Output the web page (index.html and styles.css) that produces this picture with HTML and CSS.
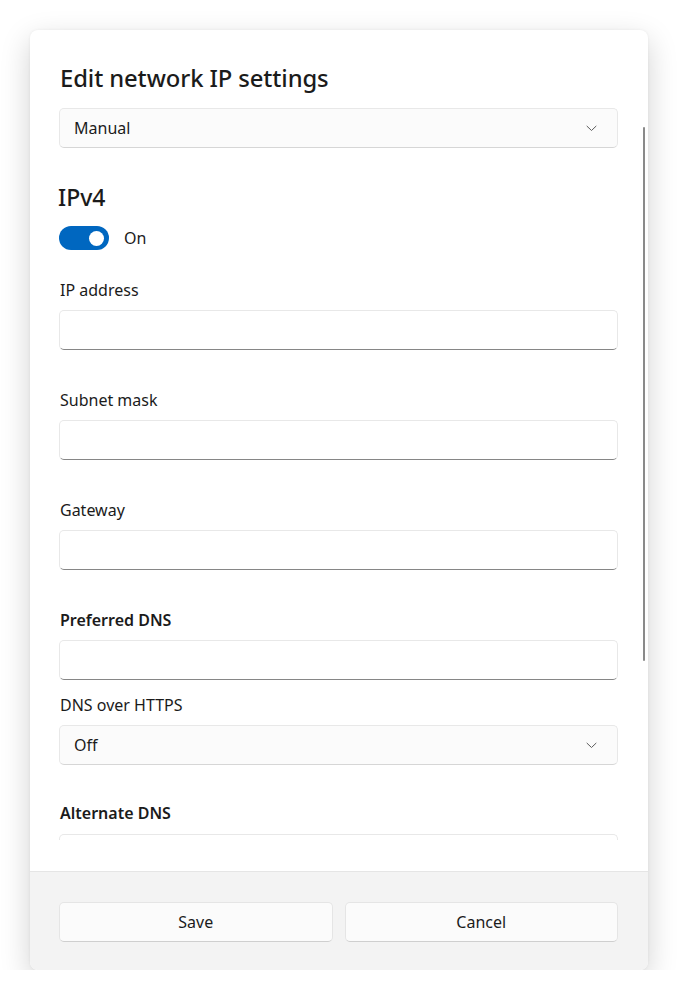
FILE: index.html
```html
<!DOCTYPE html>
<html lang="en">
<head>
<meta charset="utf-8">
<title>Edit network IP settings</title>
<link rel="stylesheet" href="styles.css">
</head>
<body>
<div class="dialog">
  <div class="main">
    <div class="scroll">
      <h1 class="title">Edit network IP settings</h1>
      <div class="select">
        <span>Manual</span>
        <svg class="chev" width="11" height="7" viewBox="0 0 11 7"><path d="M1 1.2 L5.5 5.5 L10 1.2" fill="none" stroke="#5c5c5c" stroke-width="1" stroke-linecap="round" stroke-linejoin="round"/></svg>
      </div>
      <h2 class="section">IPv4</h2>
      <div class="toggle-row">
        <span class="toggle"><span class="knob"></span></span>
        <span class="toggle-label">On</span>
      </div>
      <div class="field first">
        <div class="label">IP address</div>
        <div class="input"></div>
      </div>
      <div class="field">
        <div class="label">Subnet mask</div>
        <div class="input"></div>
      </div>
      <div class="field">
        <div class="label">Gateway</div>
        <div class="input"></div>
      </div>
      <div class="field">
        <div class="label bold">Preferred DNS</div>
        <div class="input"></div>
      </div>
      <div class="field tight">
        <div class="label">DNS over HTTPS</div>
        <div class="select">
          <span>Off</span>
          <svg class="chev" width="11" height="7" viewBox="0 0 11 7"><path d="M1 1.2 L5.5 5.5 L10 1.2" fill="none" stroke="#5c5c5c" stroke-width="1" stroke-linecap="round" stroke-linejoin="round"/></svg>
        </div>
      </div>
      <div class="field alt">
        <div class="label bold">Alternate DNS</div>
        <div class="input"></div>
      </div>
    </div>
    <div class="scrollbar"></div>
  </div>
  <div class="footer">
    <button class="btn">Save</button>
    <button class="btn">Cancel</button>
  </div>
</div>
</body>
</html>
```

FILE: styles.css
```css
* { box-sizing: border-box; }
html, body { margin: 0; padding: 0; background: #ffffff; }
body {
  font-family: "Noto Sans", "Open Sans", sans-serif;
  color: #1b1b1b;
  padding: 30px 30px 0 30px;
}
.dialog {
  width: 618px;
  height: 940px;
  background: #ffffff;
  border-radius: 8px;
  box-shadow: 0 10px 30px rgba(0, 0, 0, 0.18), 0 0 3px rgba(0, 0, 0, 0.06);
  overflow: hidden;
  display: flex;
  flex-direction: column;
}
.main {
  position: relative;
  height: 841px;
  padding-bottom: 31px;
}
.scroll {
  height: 810px;
  overflow: hidden;
  padding: 34px 30px 0 29px;
}
.title {
  margin: 0;
  font-size: 23.8px;
  font-weight: 500;
  line-height: 28px;
  padding-left: 1px;
  letter-spacing: -0.1px;
}
.select {
  margin-top: 16px;
  height: 40px;
  background: #fbfbfb;
  border: 1px solid #e8e8e8;
  border-bottom-color: #d6d6d6;
  border-radius: 5px;
  display: flex;
  align-items: center;
  justify-content: space-between;
  padding: 0 20px 0 14px;
  font-size: 16px;
}
.chev { display: block; }
.section {
  margin: 35px 0 0 -1px;
  font-size: 23px;
  font-weight: 500;
  line-height: 28px;
}
.toggle-row {
  margin-top: 15px;
  display: flex;
  align-items: center;
  gap: 15px;
  height: 24px;
}
.toggle {
  width: 50px;
  height: 24px;
  border-radius: 12px;
  background: #0067c0;
  display: flex;
  align-items: center;
  justify-content: flex-end;
  padding-right: 5px;
}
.knob {
  width: 15px;
  height: 15px;
  border-radius: 50%;
  background: #ffffff;
}
.toggle-label { font-size: 16px; line-height: 20px; }
.field { margin-top: 40px; }
.field.first { margin-top: 30px; }
.field.tight { margin-top: 15px; }
.field.alt { margin-top: 38px; }
.label {
  font-size: 16px;
  line-height: 20px;
  padding-left: 1px;
}
.label.bold { font-weight: 600; }
.input {
  margin-top: 10px;
  height: 40px;
  background: #ffffff;
  border: 1px solid #e8e8e8;
  border-bottom: 1px solid #868686;
  border-radius: 5px;
}
.field.tight .select { margin-top: 10px; }
.field.alt .input { margin-top: 11px; }
.scrollbar {
  position: absolute;
  left: 613px;
  top: 97px;
  width: 2px;
  height: 534px;
  border-radius: 1px;
  background: #8a8a8a;
}
.footer {
  flex: 1;
  background: #f3f3f3;
  border-top: 1px solid #e5e5e5;
  padding: 30px 30px 0 29px;
  display: grid;
  grid-template-columns: 1fr 1fr;
  column-gap: 12px;
  align-content: start;
}
.btn {
  height: 40px;
  background: #fbfbfb;
  border: 1px solid #e5e5e5;
  border-bottom-color: #cfcfcf;
  border-radius: 5px;
  font-family: "Noto Sans", "Open Sans", sans-serif;
  font-size: 16px;
  color: #1b1b1b;
}
```
